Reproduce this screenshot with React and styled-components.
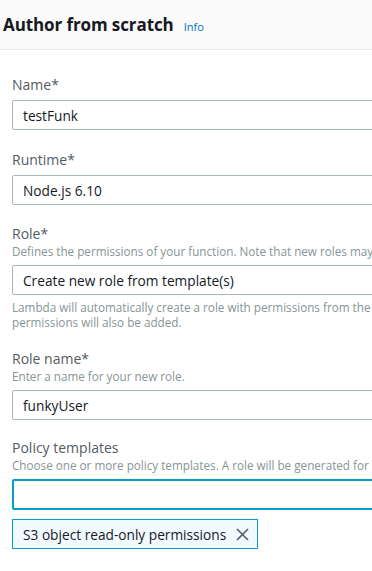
import React from "react";
import styled, { createGlobalStyle } from "styled-components";

const GlobalStyle = createGlobalStyle`
  html, body {
    margin: 0;
    padding: 0;
    background: #ffffff;
    overflow: hidden;
  }
  body {
    font-family: "Open Sans", "Noto Sans", sans-serif;
    color: #16191f;
  }
`;

const Page = styled.div`
  width: 372px;
  height: 571px;
  overflow: hidden;
  background: #ffffff;
`;

const Header = styled.div`
  height: 49px;
  background: #fafafa;
  border-bottom: 1px solid #eaeded;
  display: flex;
  align-items: center;
  padding-left: 3px;
  gap: 10px;
`;

const Title = styled.h2`
  margin: 0;
  font-size: 17px;
  font-weight: 700;
  color: #16191f;
  letter-spacing: -0.1px;
`;

const InfoLink = styled.a`
  font-size: 11px;
  color: #0073bb;
  text-decoration: none;
  margin-top: 4px;
`;

const Form = styled.form`
  width: 700px;
  padding: 25px 0 0 12px;
  display: flex;
  flex-direction: column;
`;

const Field = styled.div`
  display: flex;
  flex-direction: column;
  margin-bottom: ${(p) => p.$gap || 20}px;
`;

const Label = styled.label`
  font-size: 14px;
  line-height: ${(p) => (p.$tight ? 18 : 20)}px;
  color: #545b64;
  margin-bottom: ${(p) => (p.$tight ? 0 : 5)}px;
`;

const Description = styled.div`
  font-size: 11.7px;
  line-height: 16px;
  color: #879596;
  white-space: nowrap;
  margin-bottom: 6px;
`;

const Hint = styled.div`
  font-size: 11.7px;
  line-height: 15px;
  color: #879596;
  margin-top: 5px;
  white-space: nowrap;
`;

const TextBox = styled.div`
  box-sizing: border-box;
  height: ${(p) => (p.$focused ? 31 : 30)}px;
  border: ${(p) => (p.$focused ? "2px solid #00a1c9" : "1px solid #aab7b8")};
  border-radius: 2px;
  padding-left: 10px;
  display: flex;
  align-items: center;
  font-size: 13.7px;
  color: #16191f;
`;

const Tag = styled.div`
  align-self: flex-start;
  box-sizing: border-box;
  height: 30px;
  margin-top: 9px;
  padding: 0 8px 0 10px;
  display: flex;
  align-items: center;
  gap: 10px;
  background: #f1faff;
  border: 1px solid #00a1c9;
  font-size: 13.7px;
  color: #16191f;
`;

const CloseIcon = () => (
  <svg width="13" height="13" viewBox="0 0 13 13" aria-hidden="true">
    <path d="M1 1 L12 12 M12 1 L1 12" stroke="#545b64" strokeWidth="1.6" fill="none" />
  </svg>
);

export default function App() {
  return (
    <Page>
      <GlobalStyle />
      <Header>
        <Title>Author from scratch</Title>
        <InfoLink>Info</InfoLink>
      </Header>
      <Form>
        <Field>
          <Label>Name*</Label>
          <TextBox>testFunk</TextBox>
        </Field>
        <Field>
          <Label>Runtime*</Label>
          <TextBox>Node.js 6.10</TextBox>
        </Field>
        <Field $gap={20}>
          <Label $tight>Role*</Label>
          <Description>
            Defines the permissions of your function. Note that new roles may not be available for a few minutes after creation.
          </Description>
          <TextBox>Create new role from template(s)</TextBox>
          <Hint>
            Lambda will automatically create a role with permissions from the selected policy templates. Note that basic Lambda
            <br />
            permissions will also be added.
          </Hint>
        </Field>
        <Field $gap={19}>
          <Label $tight>Role name*</Label>
          <Description>Enter a name for your new role.</Description>
          <TextBox>funkyUser</TextBox>
        </Field>
        <Field>
          <Label $tight>Policy templates</Label>
          <Description>
            Choose one or more policy templates. A role will be generated for you before your function is created.
          </Description>
          <TextBox $focused />
          <Tag>
            S3 object read-only permissions
            <CloseIcon />
          </Tag>
        </Field>
      </Form>
    </Page>
  );
}
